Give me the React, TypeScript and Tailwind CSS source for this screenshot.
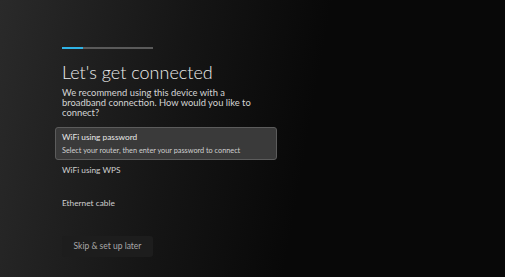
const options = [
  { label: 'WiFi using password', hint: 'Select your router, then enter your password to connect' },
  { label: 'WiFi using WPS' },
  { label: 'Ethernet cable' },
];

export default function App() {
  const selected = 0;
  return (
    <div className="w-[505px] h-[277px] overflow-hidden bg-[linear-gradient(100deg,#2a2a2a_0%,#151515_35%,#080808_60%,#080808_100%)] font-['Lato',sans-serif] text-[#e6e6e6]">
      <div className="pl-[62px] pt-[47px]">
        {/* Progress */}
        <div className="w-[91px] h-[2px] bg-[#5a5a5a] flex">
          <div className="w-[21px] h-full bg-[#2fb3e6]" />
        </div>

        <h1 className="mt-[13px] text-[18px] leading-[21px] font-light text-[#ececec]">Let's get connected</h1>
        <p className="mt-[5px] w-[190px] text-[9.4px] leading-[10px] text-[#d4d4d4]">
          We recommend using this device with a broadband connection. How would you like to connect?
        </p>
      </div>

      {/* Options */}
      <div className="mt-[9px] ml-[55px] w-[222px] flex flex-col">
        {options.map((o, i) =>
          i === selected ? (
            <div
              key={o.label}
              className="h-[33px] rounded-[3px] border border-[#5c5c5c] bg-[#3a3a3a] pl-[6px] pt-[4px] flex flex-col gap-[4px]"
            >
              <span className="text-[8.3px] leading-[10px] text-[#e8e8e8]">{o.label}</span>
              <span className="text-[7.3px] leading-[9px] text-[#cfcfcf]">{o.hint}</span>
            </div>
          ) : (
            <div
              key={o.label}
              className={`h-[20px] pl-[7px] flex items-center text-[8.3px] text-[#cfcfcf] ${i === 2 ? 'mt-[13px]' : ''}`}
            >
              {o.label}
            </div>
          )
        )}
      </div>

      <div className="mt-[18px] ml-[62px]">
        <button className="w-[91px] h-[21px] rounded-[3px] bg-[#1d1d1d] text-[8.5px] text-[#a8a8a8]">
          Skip &amp; set up later
        </button>
      </div>
    </div>
  );
}
